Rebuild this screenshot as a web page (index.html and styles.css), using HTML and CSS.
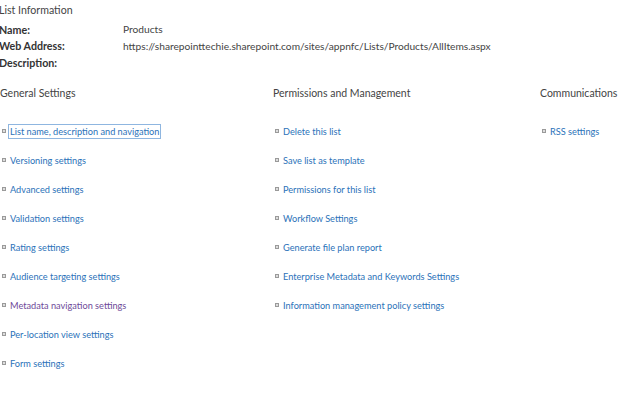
FILE: index.html
```html
<!DOCTYPE html>
<html>
<head>
<meta charset="utf-8">
<link rel="stylesheet" href="styles.css">
</head>
<body>
<div class="page">
  <div class="title">List Information</div>
  <div class="info">
    <div class="label">Name:</div><div class="value">Products</div>
    <div class="label">Web Address:</div><div class="value">https://sharepointtechie.sharepoint.com/sites/appnfc/Lists/Products/AllItems.aspx</div>
    <div class="label">Description:</div><div class="value"></div>
  </div>
  <div class="sections">
    <div class="section">
      <div class="sec-head">General Settings</div>
      <ul class="links">
        <li><a class="focused">List name, description and navigation</a></li>
        <li><a>Versioning settings</a></li>
        <li><a>Advanced settings</a></li>
        <li><a>Validation settings</a></li>
        <li><a>Rating settings</a></li>
        <li><a>Audience targeting settings</a></li>
        <li><a class="visited">Metadata navigation settings</a></li>
        <li><a>Per-location view settings</a></li>
        <li><a>Form settings</a></li>
      </ul>
    </div>
    <div class="section">
      <div class="sec-head">Permissions and Management</div>
      <ul class="links">
        <li><a>Delete this list</a></li>
        <li><a>Save list as template</a></li>
        <li><a>Permissions for this list</a></li>
        <li><a>Workflow Settings</a></li>
        <li><a>Generate file plan report</a></li>
        <li><a>Enterprise Metadata and Keywords Settings</a></li>
        <li><a>Information management policy settings</a></li>
      </ul>
    </div>
    <div class="section">
      <div class="sec-head">Communications</div>
      <ul class="links">
        <li><a>RSS settings</a></li>
      </ul>
    </div>
  </div>
</div>
</body>
</html>
```
FILE: styles.css
```css
html, body {
  margin: 0;
  padding: 0;
  background: #fff;
}
.page {
  font-family: "Lato", "Liberation Sans", sans-serif;
  font-size: 10.2px;
  color: #444;
  width: 624px;
  height: 396px;
  overflow: hidden;
}
.title {
  margin: 2px 0 0 -1px;
  line-height: 16px;
  font-size: 10.6px;
  color: #444;
}
.info {
  margin-top: 3px;
  display: grid;
  grid-template-columns: 123px auto;
  grid-auto-rows: 16.5px;
  align-items: center;
}
.label {
  font-weight: bold;
  font-size: 10.7px;
  color: #333;
  margin-left: -1px;
}
.value {
  color: #444;
}
.sections {
  margin-top: 14px;
  display: grid;
  grid-template-columns: 273px 267px auto;
}
.sec-head {
  line-height: 16px;
  font-size: 10.5px;
  color: #444;
}
.links {
  list-style: none;
  margin: 16px 0 0 0;
  padding: 0;
}
.links li {
  display: flex;
  align-items: center;
  height: 29px;
}
.links li::before {
  content: "";
  width: 2px;
  height: 2px;
  border: 1px solid #9a9a9a;
  background: #ddd;
  margin: 0 4px 0 2px;
  flex: none;
}
.links a {
  color: #2b72b9;
  font-size: 9.2px;
  line-height: 13px;
  white-space: nowrap;
  border: 1px solid transparent;
  padding: 0 1px;
  margin-left: -2px;
}
.links a.focused {
  border-color: #8fb6e0;
}
.links a.visited {
  color: #6e4a99;
}
```
